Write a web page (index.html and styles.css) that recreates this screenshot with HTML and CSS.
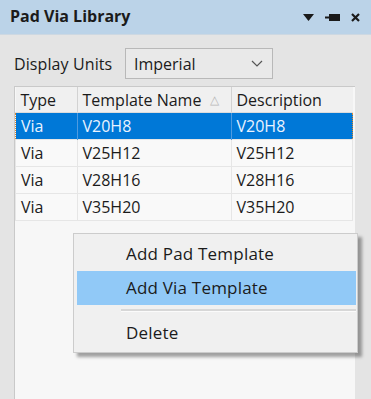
FILE: index.html
```html
<!DOCTYPE html>
<html>
	<head>
		<title>Pad Via Library</title>
		<link rel="stylesheet" href="styles.css">
	</head>
	<body>
	<div id="panel">
		<div id="titleBar">
			<span class="title">Pad Via Library</span>
			<span class="tools">
				<svg width="11" height="8" viewBox="0 0 11 8"><path d="M0 0H11L5.5 7Z" fill="#1a1a1a"/></svg>
				<svg width="15" height="9" viewBox="0 0 15 9"><path d="M0 4.5H5M5 1V8M5 2H14V7H5" stroke="#1a1a1a" stroke-width="2" fill="none"/><rect x="6" y="2" width="7" height="5" fill="#1a1a1a"/></svg>
				<svg width="9" height="9" viewBox="0 0 9 9"><path d="M1 1L8 8M8 1L1 8" stroke="#1a1a1a" stroke-width="2.2"/></svg>
			</span>
		</div>
		<div id="unitsRow">
			<span class="label">Display Units</span>
			<div class="combo"><span>Imperial</span><svg width="12" height="7" viewBox="0 0 12 7"><path d="M1 1L6 6L11 1" stroke="#555" stroke-width="1.2" fill="none"/></svg></div>
		</div>
		<div id="listBox">
			<table>
				<tr class="head"><th class="cType">Type</th><th class="cName">Template Name <span class="sort">&#9651;</span></th><th class="cDesc">Description</th></tr>
				<tr class="sel"><td>Via</td><td>V20H8</td><td>V20H8</td></tr>
				<tr><td>Via</td><td>V25H12</td><td>V25H12</td></tr>
				<tr><td>Via</td><td>V28H16</td><td>V28H16</td></tr>
				<tr><td>Via</td><td>V35H20</td><td>V35H20</td></tr>
			</table>
		</div>
		<div id="contextMenu">
			<div class="item">Add Pad Template</div>
			<div class="item hover">Add Via Template</div>
			<div class="sep"></div>
			<div class="item">Delete</div>
		</div>
	</div>
	</body>
</html>
```

FILE: styles.css
```css
body{margin:0; font-family:"Open Sans", "Noto Sans", sans-serif; font-size:16px; color:#1b1b1b;}
#panel{position:relative; width:371px; height:399px; overflow:hidden; background:#e4e4e4;}
#titleBar{height:35px; background:#bbd3e8; display:flex; align-items:center; justify-content:space-between; padding:0 11px 0 10px; border-bottom:1px solid #cdd8e2; box-sizing:border-box;}
#titleBar .title{font-weight:bold; font-size:16px; margin-top:-2px;}
#titleBar .tools{display:flex; align-items:center; gap:11px; margin-top:1px;}
#unitsRow{display:flex; align-items:center; margin-top:13px; padding-left:14px; height:31px;}
#unitsRow .label{width:111px; font-size:16px; letter-spacing:0.1px;}
.combo{width:148px; height:31px; box-sizing:border-box; border:1px solid #b8b8b8; background:#e9e9e9; display:flex; align-items:center; justify-content:space-between; padding:0 9px 0 8px;}
#listBox{margin:7px 0 0 14px; width:340px; height:320px; background:#f7f7f7; border-top:1px solid #c9c9c9; border-left:1px solid #c9c9c9;}
table{border-collapse:collapse; width:338px; font-size:16px;}
th,td{text-align:left; font-weight:normal; padding:0 0 0 5px; height:26px; border:1px solid #e6e6e6; white-space:nowrap;}
td{background:#f9f9f9;}
tr.head th{background:#f0f0f0; border:none; border-right:1px solid #d2d2d2; border-bottom:1px solid #dcdcdc; height:25px;}
tr.head th:last-child{border-right:none;}
.cType{width:56px;}
.cName{width:148px;}
.sort{color:#b8b8b8; font-size:12px; margin-left:4px; position:relative; top:-2px;}
tr.sel td{background:#0078d7; color:#eaf3ff; border-top:1px dotted #e08a2c; border-bottom:1px dotted #e08a2c; border-left:1px solid #4f9be0; border-right:1px solid #4f9be0;}
tr.sel td:first-child{border-left:1px dotted #e08a2c;}
tr.sel td:last-child{border-right:1px dotted #e08a2c;}
#contextMenu{position:absolute; left:73px; top:233px; width:285px; height:120px; box-sizing:border-box; background:#f0f0f0; border:1px solid #cccccc; padding:3px 1px 3px 3px; box-shadow:4px 4px 3px rgba(0,0,0,0.35); font-size:17px;}
#contextMenu .item{height:34px; line-height:34px; padding-left:49px; letter-spacing:0.2px;}
#contextMenu .item.hover{background:#91c9f7;}
#contextMenu .sep{height:2px; margin:4px 0 4px 44px; background:#d7d7d7; border-bottom:1px solid #fbfbfb;}
```
